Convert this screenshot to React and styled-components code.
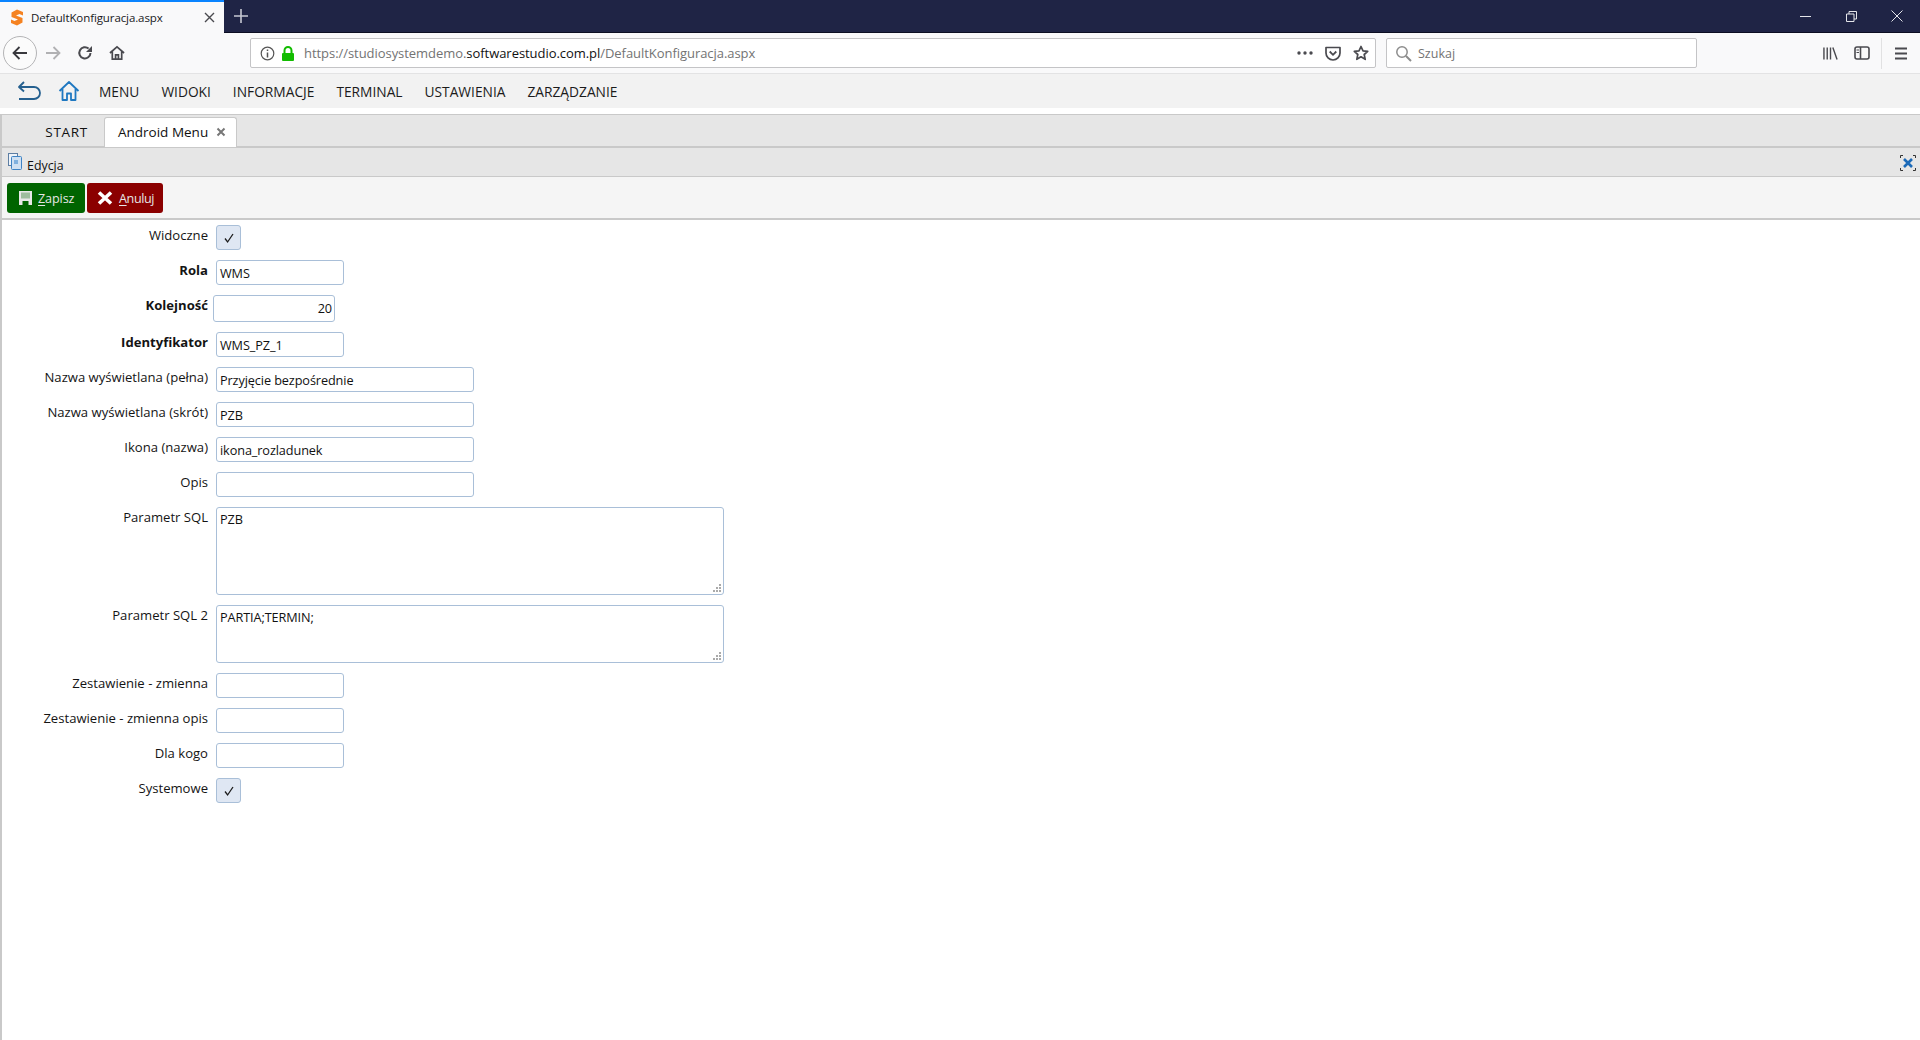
import React from 'react';
import styled, { createGlobalStyle } from 'styled-components';

const Global = createGlobalStyle`
  html, body { margin: 0; padding: 0; background: #fff; height: 100%; }
  #root { min-height: 100%; }
  * { box-sizing: border-box; }
  body { font-family: "Open Sans", "Noto Sans", sans-serif; color: #111; overflow: hidden; }
`;

const Page = styled.div`display: flex; flex-direction: column; height: 1040px;`;

const TabStrip = styled.div`display: flex; align-items: stretch; height: 33px; background: #1f2445; border-bottom: 1px solid #0c0e22;`;
const BrowserTab = styled.div`
  width: 224px; height: 33px; background: #f9f9fa; border-top: 2px solid #0a84ff;
  display: flex; align-items: center; padding: 0 9px 0 10px; font-size: 11.5px; letter-spacing: -.1px; color: #18181a;
  span { margin-left: 7px; flex: 1; }
`;
const NewTab = styled.div`width: 34px; display: flex; align-items: center; justify-content: center; color: #c6c8d2;`;
const WindowControls = styled.div`margin-left: auto; display: flex; align-items: center; color: #e4e5ea;`;
const WindowBtn = styled.div`width: 46px; height: 32px; display: flex; align-items: center; justify-content: center;`;

const NavBar = styled.div`
  height: 41px; background: #f9f9fa; border-bottom: 1px solid #e3e3e4;
  display: flex; align-items: center; padding: 0 0 0 3px; color: #4a4a4f;
`;
const BackCircle = styled.div`
  width: 34px; height: 34px; border: 1px solid #b4b4b6; border-radius: 50%; background: #fbfbfb;
  display: flex; align-items: center; justify-content: center; color: #38383d;
`;
const NavIcon = styled.div`
  display: flex; align-items: center; justify-content: center; width: ${p => p.$w || 16}px; margin-left: ${p => p.$ml || 0}px;
  color: ${p => p.$c || '#4a4a4f'};
`;
const UrlBar = styled.div`
  margin-left: 125px; width: 1126px; height: 30px; background: #fff; border: 1px solid #c4c4c6; border-radius: 2px;
  display: flex; align-items: center; padding: 0 6px 0 9px; font-size: 13px; color: #737373; letter-spacing: -.05px;
  b { font-weight: 400; color: #111; }
`;
const UrlText = styled.div`margin-left: 9px; flex: 1;`;
const SearchBar = styled.div`
  margin-left: 10px; width: 311px; height: 30px; background: #fff; border: 1px solid #c4c4c6; border-radius: 2px;
  display: flex; align-items: center; padding: 0 8px; font-size: 12.5px; color: #737373;
  span { margin-left: 6px; }
`;
const Sep = styled.div`width: 1px; height: 31px; background: #e1e1e2; margin-left: 11px;`;

const AppMenu = styled.div`
  height: 34px; background: #f2f2f2; margin-bottom: 6px; display: flex; align-items: center; padding: 0 0 0 17px; font-size: 13.75px; color: #1b1b1b;
`;
const MenuItem = styled.div`margin-left: ${p => p.$first ? 19 : 22}px;`;

const AppTabs = styled.div`
  height: 34px; background: #e6e6e6; border-top: 1px solid #c9c9c9; border-left: 2px solid #c9c9c9; border-bottom: 2px solid #c9c9c9;
  display: flex; align-items: flex-end; font-size: 13.5px; color: #111;
`;
const StartTab = styled.div`width: 102px; text-align: right; padding: 0 16px 5px 0; align-self: flex-end; letter-spacing: .7px;`;
const ActiveTab = styled.div`
  width: 133px; height: 30px; margin-bottom: -1px; background: #fff; border: 1px solid #c9c9c9; border-bottom: none; border-radius: 3px 3px 0 0;
  display: flex; align-items: center; padding: 0 0 2px 13px;
  span { flex: 1; }
`;
const Main = styled.div`flex: 1; border-left: 2px solid #c9c9c9; display: flex; flex-direction: column;`;
const Band = styled.div`
  height: 29px; background: #e6e6e6; border-bottom: 1px solid #c9c9c9; display: flex; align-items: center; padding: 0 4px 0 6px; font-size: 12.4px;
  span { margin-left: 5px; margin-top: 6px; }
`;
const Toolbar = styled.div`height: 43px; background: #f5f5f5; border-bottom: 2px solid #c9c9c9; display: flex; align-items: flex-start; padding: 6px 0 0 5px; gap: 2px;`;
const Button = styled.div`
  width: ${p => p.$w}px; height: 30px; background: ${p => p.$bg}; border-radius: 3px; color: #e6e6e6; display: flex; align-items: center;
  padding-left: ${p => p.$pl}px; font-size: 12.6px; gap: 6px; letter-spacing: ${p => p.$ls ?? -0.1}px;
  u { text-underline-offset: 2px; }
`;
const Form = styled.div`display: flex; flex-direction: column; gap: 10px; padding-top: 5px;`;
const Row = styled.div`display: flex; align-items: flex-start;`;
const Label = styled.div`
  width: 206px; text-align: right; font-size: 13.1px; line-height: 17px; padding-top: 2px;
  font-weight: ${p => p.$bold ? 700 : 400}; color: #141414;
`;
const Field = styled.div`
  margin-left: ${p => p.$ml ?? 8}px; width: ${p => p.$w}px; height: ${p => p.$h || 25}px; border: 1px solid #a9bfd8; border-radius: 3px; background: #fff;
  font-size: 12.7px; line-height: ${p => p.$area ? 15 : 23}px; padding: ${p => p.$area ? '4px 3px' : '1px 3px 0'}; text-align: ${p => p.$right ? 'right' : 'left'};
  padding-right: ${p => p.$right ? 2 : 3}px;
  position: relative; color: #111; letter-spacing: -.1px;
`;
const Grip = styled.svg`position: absolute; right: 1px; bottom: 1px;`;
const Check = styled.div`
  margin-left: 8px; width: 25px; height: 25px; border: 1px solid #a9bfd8; border-radius: 3px; background: #dfe7f3;
  display: flex; align-items: center; justify-content: center;
`;

const CheckMark = () => (
  <svg width="12" height="12" viewBox="0 0 12 12"><path d="M2 6.500 L4.600 10 L10 2" fill="none" stroke="#1c1c1c" strokeWidth="1.300"/></svg>
);
const ResizeGrip = () => (
  <Grip width="9" height="9" viewBox="0 0 9 9" fill="#aaa">
    <rect x="6" y="0" width="2" height="2"/><rect x="3" y="3" width="2" height="2"/><rect x="6" y="3" width="2" height="2"/>
    <rect x="0" y="6" width="2" height="2"/><rect x="3" y="6" width="2" height="2"/><rect x="6" y="6" width="2" height="2"/>
  </Grip>
);

const rows = [
  { type: 'check', label: 'Widoczne' },
  { label: 'Rola', bold: true, w: 128, value: 'WMS' },
  { label: 'Kolejność', bold: true, w: 122, h: 27, ml: 5, right: true, value: '20' },
  { label: 'Identyfikator', bold: true, w: 128, value: 'WMS_PZ_1' },
  { label: 'Nazwa wyświetlana (pełna)', w: 258, value: 'Przyjęcie bezpośrednie' },
  { label: 'Nazwa wyświetlana (skrót)', w: 258, value: 'PZB' },
  { label: 'Ikona (nazwa)', w: 258, value: 'ikona_rozladunek' },
  { label: 'Opis', w: 258, value: '' },
  { label: 'Parametr SQL', w: 508, h: 88, area: true, value: 'PZB' },
  { label: 'Parametr SQL 2', w: 508, h: 58, area: true, value: 'PARTIA;TERMIN;' },
  { label: 'Zestawienie - zmienna', w: 128, value: '' },
  { label: 'Zestawienie - zmienna opis', w: 128, value: '' },
  { label: 'Dla kogo', w: 128, value: '' },
  { type: 'check', label: 'Systemowe' },
];

export default function App() {
  return (
    <Page>
      <Global />
      <TabStrip>
        <BrowserTab>
          <svg width="14" height="17" viewBox="0 0 14 17">
            <path d="M7 .5 L13 3 V6.500 L9.500 5 L6 6.500 L12.500 9 V13.500 L7 16.500 L1 14 V10.500 L4.500 12 L8 10.500 L1.500 8 V3.500 Z" fill="#f58220"/>
          </svg>
          <span>DefaultKonfiguracja.aspx</span>
          <svg width="11" height="11" viewBox="0 0 11 11"><path d="M1 1 L10 10 M10 1 L1 10" stroke="#4a4a4f" strokeWidth="1.400"/></svg>
        </BrowserTab>
        <NewTab>
          <svg width="14" height="14" viewBox="0 0 14 14"><path d="M7 0 V14 M0 7 H14" stroke="currentColor" strokeWidth="1.600"/></svg>
        </NewTab>
        <WindowControls>
          <WindowBtn><svg width="11" height="11" viewBox="0 0 11 11"><path d="M0 5.500 H11" stroke="currentColor"/></svg></WindowBtn>
          <WindowBtn><svg width="11" height="11" viewBox="0 0 11 11"><path d="M.5 3 H8 V10.500 H.5 Z M3 3 V.5 H10.500 V8 H8" fill="none" stroke="currentColor"/></svg></WindowBtn>
          <WindowBtn><svg width="12" height="12" viewBox="0 0 12 12"><path d="M.5 .5 L11.500 11.500 M11.500 .5 L.5 11.500" stroke="currentColor"/></svg></WindowBtn>
        </WindowControls>
      </TabStrip>
      <NavBar>
        <BackCircle>
          <svg width="16" height="14" viewBox="0 0 16 14"><path d="M15 7 H2 M7.500 1 L1.500 7 L7.500 13" fill="none" stroke="currentColor" strokeWidth="1.800"/></svg>
        </BackCircle>
        <NavIcon $w={16} $ml={8} $c="#b1b1b3">
          <svg width="16" height="14" viewBox="0 0 16 14"><path d="M1 7 H14 M8.500 1 L14.500 7 L8.500 13" fill="none" stroke="currentColor" strokeWidth="1.800"/></svg>
        </NavIcon>
        <NavIcon $w={16} $ml={16}>
          <svg width="16" height="16" viewBox="0 0 16 16"><path d="M13.500 8 A5.600 5.600 0 1 1 11.600 3.600" fill="none" stroke="currentColor" strokeWidth="2"/><path d="M15 1 V7 H9 Z" fill="currentColor"/></svg>
        </NavIcon>
        <NavIcon $w={16} $ml={16}>
          <svg width="17" height="16" viewBox="0 0 17 16"><path d="M1 8 L8.500 1.500 L16 8 M3.500 6.500 V14.500 H13.500 V6.500 M7 14.500 V10 H10 V14.500" fill="none" stroke="currentColor" strokeWidth="1.800"/></svg>
        </NavIcon>
        <UrlBar>
          <svg width="15" height="15" viewBox="0 0 15 15"><circle cx="7.500" cy="7.500" r="6.300" fill="none" stroke="#555" strokeWidth="1.200"/><path d="M7.500 6.500 V11.500 M7.500 3.500 V5" stroke="#555" strokeWidth="1.500"/></svg>
          <svg style={{ marginLeft: 6 }} width="14" height="15" viewBox="0 0 14 15"><path d="M3.500 7 V4.500 A3.500 3.500 0 0 1 10.500 4.500 V7" fill="none" stroke="#12bc00" strokeWidth="2"/><rect x="1" y="7" width="12" height="8" rx="1" fill="#12bc00"/></svg>
          <UrlText>https://studiosystemdemo.<b>softwarestudio.com.pl</b>/DefaultKonfiguracja.aspx</UrlText>
          <svg width="16" height="4" viewBox="0 0 16 4" fill="#4a4a4f"><circle cx="2" cy="2" r="1.700"/><circle cx="8" cy="2" r="1.700"/><circle cx="14" cy="2" r="1.700"/></svg>
          <svg style={{ marginLeft: 12 }} width="16" height="15" viewBox="0 0 16 15"><path d="M1 1.500 H15 V7 A7 7 0 0 1 1 7 Z" fill="none" stroke="#4a4a4f" strokeWidth="1.700" strokeLinejoin="round"/><path d="M4.700 5.500 L8 8.800 L11.300 5.500" fill="none" stroke="#4a4a4f" strokeWidth="1.800"/></svg>
          <svg style={{ marginLeft: 12 }} width="16" height="16" viewBox="0 0 16 16"><path d="M8 1.500 L10 5.800 L14.700 6.300 L11.200 9.500 L12.200 14.300 L8 11.800 L3.800 14.300 L4.800 9.500 L1.300 6.300 L6 5.800 Z" fill="none" stroke="#4a4a4f" strokeWidth="1.700" strokeLinejoin="round"/></svg>
        </UrlBar>
        <SearchBar>
          <svg width="17" height="17" viewBox="0 0 17 17"><circle cx="7" cy="7" r="5.200" fill="none" stroke="#8c8c8c" strokeWidth="1.500"/><path d="M11 11 L16 16" stroke="#8c8c8c" strokeWidth="2"/></svg>
          <span>Szukaj</span>
        </SearchBar>
        <NavIcon $w={15} $ml={126}>
          <svg width="16" height="15" viewBox="0 0 16 15"><path d="M1 1 V14 M4.500 1 V14 M8 1 V14 M10.500 1 L15 14" fill="none" stroke="currentColor" strokeWidth="1.500"/></svg>
        </NavIcon>
        <NavIcon $w={16} $ml={16}>
          <svg width="16" height="14" viewBox="0 0 16 14"><rect x="1" y="1" width="14" height="12" rx="2" fill="none" stroke="currentColor" strokeWidth="1.600"/><path d="M6.500 1 V13" stroke="currentColor" strokeWidth="1.600"/><path d="M2.500 4 H5 M2.500 6.500 H5" stroke="currentColor" strokeWidth="1.200"/></svg>
        </NavIcon>
        <Sep />
        <NavIcon $w={13} $ml={12}>
          <svg width="12" height="13" viewBox="0 0 12 13"><path d="M0 1.500 H12 M0 6.500 H12 M0 11.500 H12" stroke="currentColor" strokeWidth="2"/></svg>
        </NavIcon>
      </NavBar>
      <AppMenu>
        <svg width="24" height="22" viewBox="0 0 24 22"><path d="M7 2 L2 7 L7 11.500 M2 7 H17 A6 6 0 0 1 17 19 H2" fill="none" stroke="#25608f" strokeWidth="1.800" strokeLinejoin="round"/></svg>
        <svg style={{ marginLeft: 17 }} width="22" height="22" viewBox="0 0 22 22"><path d="M1.500 11 L11 2 L20.500 11 M4.500 9 V20 H9 V13.500 H13 V20 H17.500 V9" fill="none" stroke="#1f78c1" strokeWidth="1.800" strokeLinejoin="round"/></svg>
        {['MENU', 'WIDOKI', 'INFORMACJE', 'TERMINAL', 'USTAWIENIA', 'ZARZĄDZANIE'].map((m, i) => (
          <MenuItem key={m} $first={i === 0}>{m}</MenuItem>
        ))}
      </AppMenu>
      <AppTabs>
        <StartTab>START</StartTab>
        <ActiveTab>
          <span>Android Menu</span>
          <svg style={{ marginRight: 10 }} width="10" height="10" viewBox="0 0 10 10"><path d="M1.500 1.500 L8.500 8.500 M8.500 1.500 L1.500 8.500" stroke="#777" strokeWidth="2"/></svg>
        </ActiveTab>
      </AppTabs>
      <Main>
        <Band>
          <svg width="14" height="18" viewBox="0 0 14 18"><rect x=".5" y=".5" width="9" height="12" fill="#eef3f9" stroke="#5d7ea3"/><rect x="3.500" y="3.500" width="10" height="13" rx="1" fill="#cfe0f2" stroke="#3f83c4"/><rect x="6" y="7" width="4" height="4" fill="#7fb0de"/></svg>
          <span>Edycja</span>
          <svg style={{ marginLeft: 'auto', marginTop: 2 }} width="16" height="16" viewBox="0 0 16 16"><path d="M4 4 L12 12 M12 4 L4 12" stroke="#1c6ab8" strokeWidth="2.600"/><path d="M.5 3 V.5 H3 M13 .5 H15.500 V3 M15.500 13 V15.500 H13 M3 15.500 H.5 V13" fill="none" stroke="#333"/></svg>
        </Band>
        <Toolbar>
          <Button $bg="#006400" $w={78} $pl={12}>
            <svg width="13" height="14" viewBox="0 0 13 14"><path d="M0 0 H13 V14 H0 Z" fill="#e8e8e8"/><rect x="2" y="1.500" width="9" height="6" fill="#9dbd9d"/><rect x="3.500" y="10" width="6" height="4" fill="#006400"/></svg>
            <span><u>Z</u>apisz</span>
          </Button>
          <Button $bg="#8b0000" $w={76} $pl={10} $ls={-0.4}>
            <svg width="16" height="14" viewBox="0 0 16 14"><path d="M2 1.500 L14 12.500 M14 1.500 L2 12.500" stroke="#fff" strokeWidth="3.600"/></svg>
            <span><u>A</u>nuluj</span>
          </Button>
        </Toolbar>
        <Form>
          {rows.map(r => (
            <Row key={r.label}>
              <Label $bold={r.bold}>{r.label}</Label>
              {r.type === 'check'
                ? <Check><CheckMark /></Check>
                : (
                  <Field $w={r.w} $h={r.h} $ml={r.ml} $right={r.right} $area={r.area}>
                    {r.value}
                    {r.area && <ResizeGrip />}
                  </Field>
                )}
            </Row>
          ))}
        </Form>
      </Main>
    </Page>
  );
}
